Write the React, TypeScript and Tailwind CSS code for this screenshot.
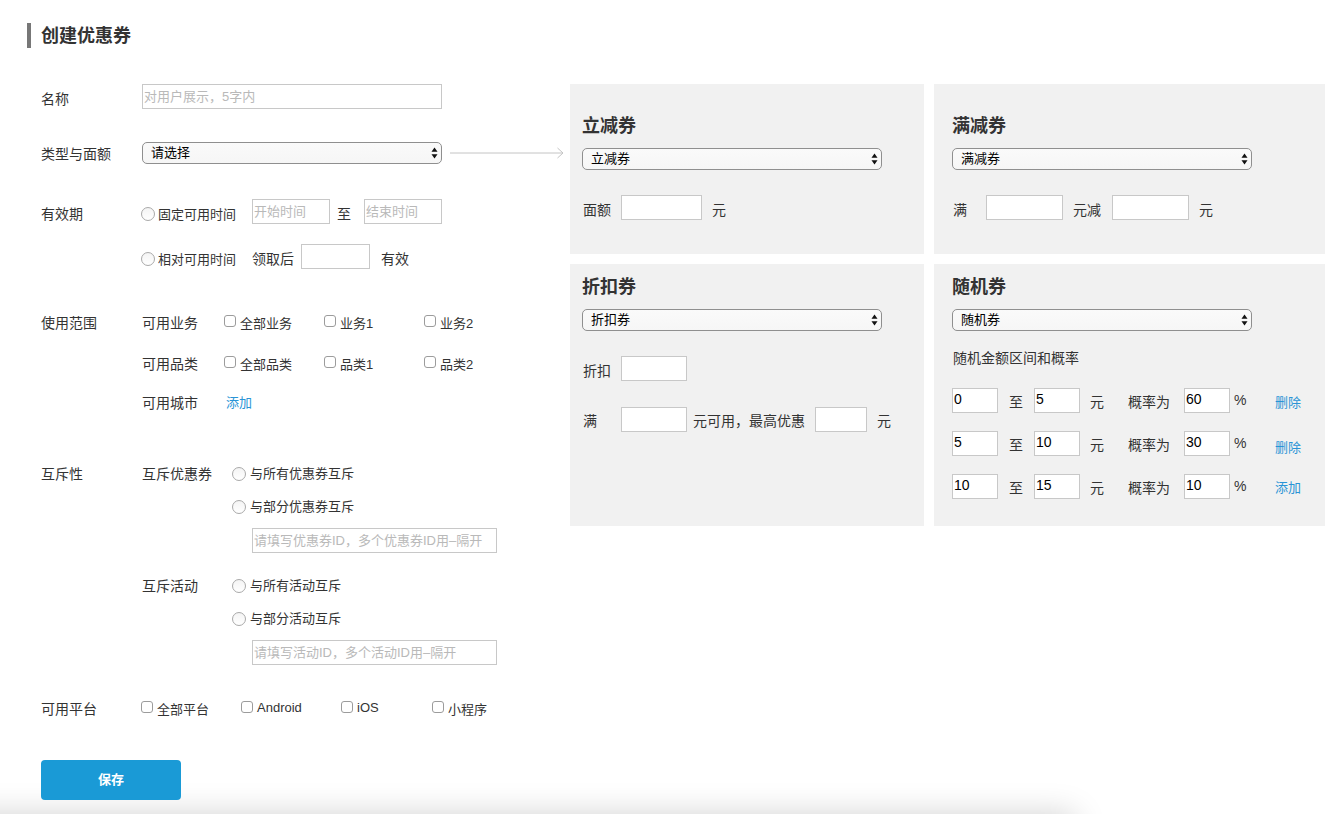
import React from "react";

const inputBase =
  "block shrink-0 h-[25px] border border-[#c8c8c8] bg-white px-[1px] text-black outline-none placeholder:text-[#b9b9b9]";
const valueInput = `${inputBase} pb-[3px] text-[14px]`;
const hintInput = `${inputBase} text-[13px]`;

function Select({ label }: { label: string }) {
  return (
    <div className="relative w-[300px] h-[22px] shrink-0">
      <select className="block w-full h-full appearance-none rounded-[5px] border border-[#8f8f8f] bg-gradient-to-b from-[#fafafa] to-[#f6f6f6] pl-[8px] pr-[20px] text-[13px] text-black outline-none">
        <option>{label}</option>
      </select>
      <svg className="absolute right-[4px] top-[5px] pointer-events-none" width="7" height="12" viewBox="0 0 7 12">
        <path d="M3.5 0.5 L6.5 4.8 H0.5 Z" fill="#111" />
        <path d="M3.5 11.5 L6.5 7.2 H0.5 Z" fill="#111" />
      </svg>
    </div>
  );
}

function Radio({ name, className = "" }: { name: string; className?: string }) {
  return (
    <input
      type="radio"
      name={name}
      className={`block shrink-0 appearance-none w-[14px] h-[14px] rounded-full border border-[#a9a9a9] bg-gradient-to-b from-[#f4f4f4] to-white ${className}`}
    />
  );
}

function Check({ label, w, y = "" }: { label: string; w: string; y?: string }) {
  return (
    <label className={`flex items-center ${w}`}>
      <input
        type="checkbox"
        className="block shrink-0 appearance-none w-[12px] h-[12px] rounded-[3px] border border-[#9c9c9c] bg-white mb-[4px]"
      />
      <span className={`ml-[4px] text-[13px] whitespace-nowrap ${y}`}>{label}</span>
    </label>
  );
}

function Section({ label, children }: { label: string; children: React.ReactNode }) {
  return (
    <div className="flex">
      <div className="w-[101px] shrink-0 h-[24px] leading-[24px] text-[14px]">{label}</div>
      <div className="flex flex-col">{children}</div>
    </div>
  );
}

function RadioLine({ name, label, className = "" }: { name: string; label: string; className?: string }) {
  return (
    <label className={`flex items-center h-[24px] ml-[90px] ${className}`}>
      <Radio name={name} />
      <span className="ml-[4px] text-[13px] whitespace-nowrap">{label}</span>
    </label>
  );
}

function RandomRow({
  a,
  b,
  p,
  action,
  className = "",
  actionY = "pt-[3px]",
}: {
  a: string;
  b: string;
  p: string;
  action: string;
  className?: string;
  actionY?: string;
}) {
  return (
    <div className={`flex items-center h-[25px] ${className}`}>
      <input defaultValue={a} className={`${valueInput} w-[46px]`} />
      <span className="ml-[11px] w-[25px] text-[14px] pt-[4px]">至</span>
      <input defaultValue={b} className={`${valueInput} w-[46px]`} />
      <span className="ml-[10px] w-[38px] text-[14px] pt-[4px]">元</span>
      <span className="w-[56px] text-[14px] pt-[4px]">概率为</span>
      <input defaultValue={p} className={`${valueInput} w-[46px]`} />
      <span className="ml-[4px] w-[41px] text-[14px]">%</span>
      <a className={`text-[13px] text-[#2a94d6] ${actionY}`}>{action}</a>
    </div>
  );
}

export default function App() {
  return (
    <div className="relative w-[1340px] h-[814px] overflow-hidden bg-white text-[#333] font-['Liberation_Sans','Noto_Sans_CJK_SC',sans-serif]">
      <div className="pt-[23px] pl-[27px]">
        <h1 className="h-[25px] leading-[27px] border-l-[4px] border-[#777] pl-[10px] text-[18px] font-bold">创建优惠券</h1>
      </div>

      <div className="flex mt-[36px]">
        <form className="w-[570px] shrink-0 pl-[41px] flex flex-col">
          <div className="flex items-start h-[25px]">
            <div className="w-[101px] text-[14px] pt-[5px]">名称</div>
            <input placeholder="对用户展示，5字内" className={`${hintInput} w-[300px]`} />
          </div>

          <div className="flex items-center h-[22px] mt-[33px]">
            <div className="w-[101px] text-[14px] pt-[2px]">类型与面额</div>
            <Select label="请选择" />
            <svg className="ml-[8px]" width="114" height="12" viewBox="0 0 114 12">
              <path d="M0 6 H113 M107.5 1 L113 6 L107.5 11" fill="none" stroke="#c4c4c4" strokeWidth="1" />
            </svg>
          </div>

          <div className="flex mt-[35px]">
            <div className="w-[100px] shrink-0 text-[14px] leading-[25px] pt-[3px]">有效期</div>
            <div className="flex flex-col">
              <div className="flex items-center h-[25px]">
                <Radio name="time" className="mt-[5px]" />
                <span className="ml-[3px] w-[94px] text-[13px] pt-[6px] whitespace-nowrap">固定可用时间</span>
                <input placeholder="开始时间" className={`${hintInput} w-[78px]`} />
                <span className="ml-[7px] w-[27px] text-[14px] pt-[5px]">至</span>
                <input placeholder="结束时间" className={`${hintInput} w-[78px]`} />
              </div>
              <div className="flex items-center h-[25px] mt-[20px]">
                <Radio name="time" className="mt-[5px]" />
                <span className="ml-[3px] w-[94px] text-[13px] pt-[6px] whitespace-nowrap">相对可用时间</span>
                <span className="w-[49px] text-[14px] pt-[5px]">领取后</span>
                <input className={`${valueInput} w-[69px]`} />
                <span className="ml-[11px] text-[14px] pt-[5px]">有效</span>
              </div>
            </div>
          </div>

          <div className="mt-[42px]">
            <Section label="使用范围">
              <div className="flex items-center h-[24px]">
                <span className="w-[82px] text-[14px]">可用业务</span>
                <Check label="全部业务" w="w-[100px]" y="pt-[1px]" />
                <Check label="业务1" w="w-[100px]" y="pt-[1px]" />
                <Check label="业务2" w="w-[100px]" y="pt-[1px]" />
              </div>
              <div className="flex items-center h-[24px] mt-[17px]">
                <span className="w-[82px] text-[14px]">可用品类</span>
                <Check label="全部品类" w="w-[100px]" y="pt-[2px]" />
                <Check label="品类1" w="w-[100px]" y="pt-[2px]" />
                <Check label="品类2" w="w-[100px]" y="pt-[2px]" />
              </div>
              <div className="flex items-center h-[24px] mt-[15px]">
                <span className="w-[84px] text-[14px]">可用城市</span>
                <a className="text-[13px] text-[#2a94d6]">添加</a>
              </div>
            </Section>
          </div>

          <div className="mt-[47px]">
            <Section label="互斥性">
              <div className="flex h-[24px]">
                <span className="text-[14px] leading-[24px] whitespace-nowrap w-[90px]">互斥优惠券</span>
                <label className="flex items-center">
                  <Radio name="c" />
                  <span className="ml-[4px] text-[13px] whitespace-nowrap">与所有优惠券互斥</span>
                </label>
              </div>
              <RadioLine name="c" label="与部分优惠券互斥" className="mt-[9px]" />
              <input
                placeholder="请填写优惠券ID，多个优惠券ID用–隔开"
                className={`${hintInput} w-[245px] ml-[110px] mt-[9px]`}
              />
              <div className="flex h-[24px] mt-[21px]">
                <span className="text-[14px] leading-[24px] whitespace-nowrap w-[90px]">互斥活动</span>
                <label className="flex items-center">
                  <Radio name="a" />
                  <span className="ml-[4px] text-[13px] whitespace-nowrap">与所有活动互斥</span>
                </label>
              </div>
              <RadioLine name="a" label="与部分活动互斥" className="mt-[9px]" />
              <input
                placeholder="请填写活动ID，多个活动ID用–隔开"
                className={`${hintInput} w-[245px] ml-[110px] mt-[9px]`}
              />
            </Section>
          </div>

          <div className="flex items-center h-[24px] mt-[32px]">
            <div className="w-[100px] text-[14px]">可用平台</div>
            <Check label="全部平台" w="w-[100px]" y="pt-[1px]" />
            <Check label="Android" w="w-[100px]" y="mb-[3px]" />
            <Check label="iOS" w="w-[91px]" y="mb-[3px]" />
            <Check label="小程序" w="w-[80px]" y="pt-[2px]" />
          </div>

          <button
            type="button"
            className="relative z-10 block w-[140px] h-[40px] mt-[39px] rounded-[4px] bg-[#1a9ad6] text-white text-[13px] font-bold"
          >
            保存
          </button>
        </form>

        <div className="grid grid-cols-[354px_391px] grid-rows-[170px_262px] gap-[10px] h-[442px]">
          <section className="bg-[#f1f1f1] pl-[12px] pt-[31px]">
            <h2 className="text-[18px] font-bold leading-[22px]">立减券</h2>
            <div className="mt-[11px]"><Select label="立减券" /></div>
            <div className="flex items-center mt-[25px] h-[25px]">
              <span className="w-[39px] pl-[1px] text-[14px] pt-[5px]">面额</span>
              <input className={`${valueInput} w-[81px]`} />
              <span className="ml-[10px] text-[14px] pt-[5px]">元</span>
            </div>
          </section>

          <section className="bg-[#f1f1f1] pl-[18px] pt-[31px]">
            <h2 className="text-[18px] font-bold leading-[22px]">满减券</h2>
            <div className="mt-[11px]"><Select label="满减券" /></div>
            <div className="flex items-center mt-[25px] h-[25px]">
              <span className="w-[34px] pl-[1px] text-[14px] pt-[5px]">满</span>
              <input className={`${valueInput} w-[77px]`} />
              <span className="ml-[10px] w-[39px] text-[14px] pt-[5px]">元减</span>
              <input className={`${valueInput} w-[77px]`} />
              <span className="ml-[10px] text-[14px] pt-[5px]">元</span>
            </div>
          </section>

          <section className="bg-[#f1f1f1] pl-[12px] pt-[12px]">
            <h2 className="text-[18px] font-bold leading-[22px]">折扣券</h2>
            <div className="mt-[11px]"><Select label="折扣券" /></div>
            <div className="flex items-center mt-[25px] h-[25px]">
              <span className="w-[39px] pl-[1px] text-[14px] pt-[5px]">折扣</span>
              <input className={`${valueInput} w-[66px]`} />
            </div>
            <div className="flex items-center mt-[26px] h-[25px]">
              <span className="w-[39px] pl-[1px] text-[14px] pt-[3px]">满</span>
              <input className={`${valueInput} w-[66px]`} />
              <span className="ml-[6px] w-[122px] text-[14px] pt-[3px] whitespace-nowrap">元可用，最高优惠</span>
              <input className={`${valueInput} w-[52px]`} />
              <span className="ml-[10px] text-[14px] pt-[3px]">元</span>
            </div>
          </section>

          <section className="bg-[#f1f1f1] pl-[18px] pt-[12px]">
            <h2 className="text-[18px] font-bold leading-[22px]">随机券</h2>
            <div className="mt-[11px]"><Select label="随机券" /></div>
            <p className="mt-[17px] ml-[1px] text-[14px] leading-[20px]">随机金额区间和概率</p>
            <RandomRow className="mt-[20px]" a="0" b="5" p="60" action="删除" actionY="pt-[4px]" />
            <RandomRow className="mt-[18px]" a="5" b="10" p="30" action="删除" actionY="pt-[9px]" />
            <RandomRow className="mt-[18px]" a="10" b="15" p="10" action="添加" actionY="pt-[3px]" />
          </section>
        </div>
      </div>

      <div className="absolute top-[814px] left-[-40px] w-[1115px] h-[40px] shadow-[0_0_32px_rgba(0,0,0,0.18)]" />
    </div>
  );
}
